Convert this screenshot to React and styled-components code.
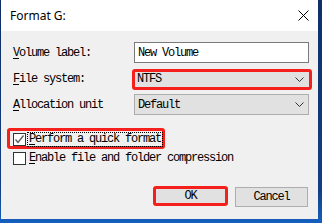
import React from "react";
import styled, { createGlobalStyle, css } from "styled-components";

const Global = createGlobalStyle`
  html, body { margin: 0; padding: 0; }
  body {
    width: 322px;
    height: 223px;
    overflow: hidden;
    background: linear-gradient(to bottom, #0f2f66 0%, #123f82 85%, #1560bf 100%);
  }
`;

const RED = "#f5201c";
const mono = css`
  font-family: "Liberation Mono", "Courier New", monospace;
  font-size: 12px;
  letter-spacing: -1.2px;
  color: #000;
`;

const Page = styled.div`
  padding-left: 1px;
`;

const Dialog = styled.div`
  width: 317px;
  height: 219px;
  background: #f0f0f0;
  display: flex;
  flex-direction: column;
  box-sizing: border-box;
`;

const TitleBar = styled.div`
  height: 31px;
  background: #fff;
  display: flex;
  align-items: center;
  justify-content: space-between;
  padding: 0 9px 1px 9px;
  box-sizing: border-box;
`;

const Title = styled.span`
  font-family: "Noto Sans", "Open Sans", sans-serif;
  font-size: 12px;
  color: #000;
`;

const Body = styled.div`
  padding: 11px 10px 0 12px;
  display: flex;
  flex-direction: column;
`;

const Form = styled.div`
  display: grid;
  grid-template-columns: 121px 175px;
  grid-auto-rows: 21px;
  row-gap: 5px;
  align-items: center;
`;

const Label = styled.span`
  ${mono};
  white-space: pre;
`;

const Key = styled.u`
  text-underline-offset: 2px;
`;

const TextInput = styled.div`
  ${mono};
  height: 21px;
  box-sizing: border-box;
  background: #fff;
  border: 1px solid #7a7a7a;
  padding-left: 3px;
  display: flex;
  align-items: center;
`;

const Select = styled.div`
  ${mono};
  height: 21px;
  box-sizing: border-box;
  background: #e1e1e1;
  border: 1px solid #adadad;
  padding: 0 4px 0 3px;
  display: flex;
  align-items: center;
  justify-content: space-between;
  ${(p) =>
    p.$highlight &&
    css`
      height: 21px;
      margin: 1px -3px 0 -2px;
      border: 3px solid ${RED};
      border-radius: 3px;
      padding: 0 5px 0 2px;
    `}
`;

const CheckList = styled.div`
  margin-top: 13px;
  display: flex;
  flex-direction: column;
  align-items: flex-start;
`;

const CheckRow = styled.div`
  display: inline-flex;
  align-items: flex-start;
  gap: 1px;
  ${(p) =>
    p.$highlight
      ? css`
          margin-left: -6px;
          height: 21px;
          box-sizing: border-box;
          border: 3px solid ${RED};
          border-radius: 3px;
          padding: 2px 0 0 3px;
        `
      : css`
          margin-top: 3px;
        `}
`;

const Box = styled.span`
  width: 13px;
  height: 13px;
  box-sizing: border-box;
  border: 1px solid #333;
  background: #fff;
  display: flex;
  align-items: center;
  justify-content: center;
  flex: none;
`;

const CheckText = styled.span`
  ${mono};
  line-height: 13px;
  white-space: pre;
  padding: 0 1px;
  margin-left: 1px;
  ${(p) =>
    p.$focus &&
    css`
      outline: 1px dotted #000;
      outline-offset: 0px;
    `}
`;

const Buttons = styled.div`
  margin-top: 22px;
  display: flex;
  justify-content: flex-end;
  gap: 7px;
`;

const Button = styled.div`
  ${mono};
  width: 73px;
  height: 20px;
  box-sizing: border-box;
  background: #e1e1e1;
  border: 1px solid #adadad;
  display: flex;
  align-items: center;
  justify-content: center;
  ${(p) =>
    p.$highlight &&
    css`
      width: 75px;
      height: 20px;
      margin-top: -1px;
      border: 3px solid ${RED};
      border-radius: 3px;
    `}
`;

const Chevron = () => (
  <svg width="9" height="5" viewBox="0 0 9 5">
    <path d="M0.5 0.5 L4.5 4.5 L8.5 0.5" fill="none" stroke="#333" strokeWidth="1" />
  </svg>
);

const CloseIcon = () => (
  <svg width="11" height="11" viewBox="0 0 11 11">
    <path d="M0.5 0.5 L10.5 10.5 M10.5 0.5 L0.5 10.5" stroke="#000" strokeWidth="1" />
  </svg>
);

const Check = () => (
  <svg width="11" height="11" viewBox="0 0 11 11">
    <path d="M1.5 5.5 L4 8.5 L9.5 1.5" fill="none" stroke="#555" strokeWidth="1.3" />
  </svg>
);

export default function App() {
  return (
    <Page>
      <Global />
      <Dialog>
        <TitleBar>
          <Title>Format G:</Title>
          <CloseIcon />
        </TitleBar>
        <Body>
          <Form>
            <Label>
              <Key>V</Key>olume label:
            </Label>
            <TextInput>New Volume</TextInput>
            <Label>
              <Key>F</Key>ile system:
            </Label>
            <Select $highlight>
              <span>NTFS</span>
              <Chevron />
            </Select>
            <Label>
              <Key>A</Key>llocation unit
            </Label>
            <Select>
              <span>Default</span>
              <Chevron />
            </Select>
          </Form>
          <CheckList>
            <CheckRow $highlight>
              <Box>
                <Check />
              </Box>
              <CheckText $focus>
                <Key>P</Key>erform a quick format
              </CheckText>
            </CheckRow>
            <CheckRow>
              <Box />
              <CheckText>
                <Key>E</Key>nable file and folder compression
              </CheckText>
            </CheckRow>
          </CheckList>
          <Buttons>
            <Button $highlight>OK</Button>
            <Button>Cancel</Button>
          </Buttons>
        </Body>
      </Dialog>
    </Page>
  );
}
